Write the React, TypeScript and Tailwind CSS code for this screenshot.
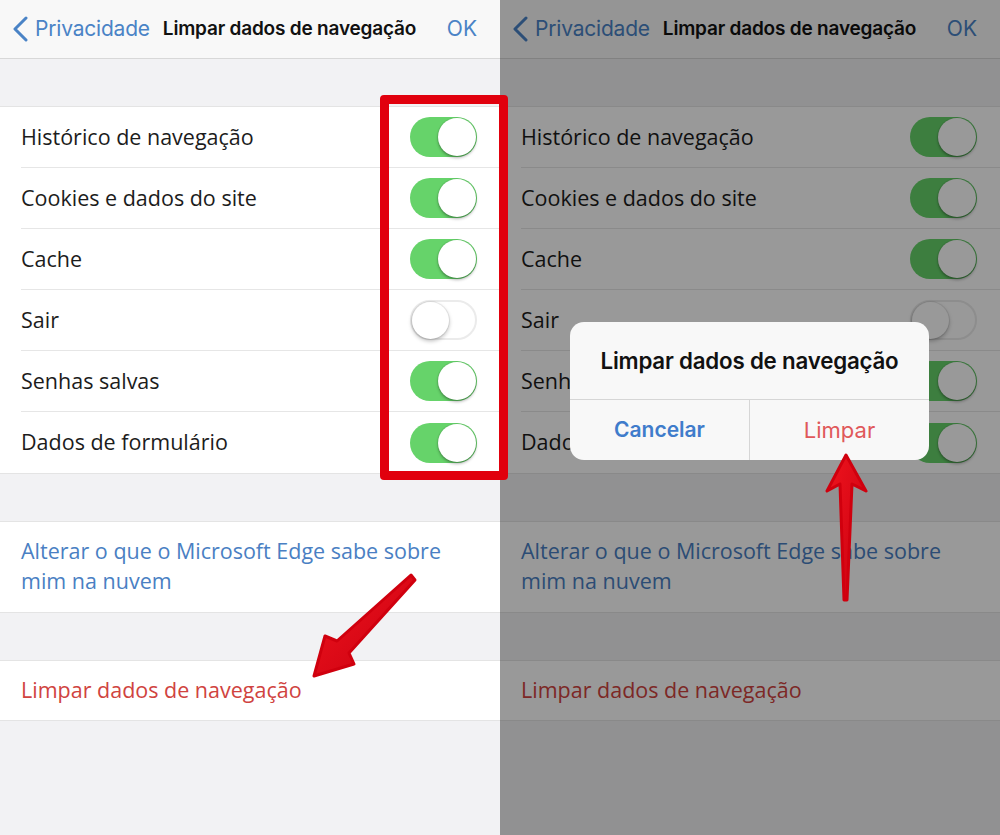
import React from 'react';

const ROWS: { label: string; on: boolean }[] = [
  { label: 'Histórico de navegação', on: true },
  { label: 'Cookies e dados do site', on: true },
  { label: 'Cache', on: true },
  { label: 'Sair', on: false },
  { label: 'Senhas salvas', on: true },
  { label: 'Dados de formulário', on: true },
];

const Toggle: React.FC<{ on: boolean }> = ({ on }) =>
  on ? (
    <div className="w-[67px] h-[40px] rounded-full bg-[#66d36a] flex items-center justify-end p-[1px]">
      <div className="w-[38px] h-[38px] rounded-full bg-white shadow-[0_2px_3px_rgba(0,0,0,0.3),0_0_0_1px_rgba(0,0,0,0.06)]" />
    </div>
  ) : (
    <div className="w-[67px] h-[40px] rounded-full bg-white border-2 border-[#ebebeb] flex items-center justify-start">
      <div className="w-[37px] h-[37px] rounded-full bg-white shadow-[0_2px_4px_rgba(0,0,0,0.28),0_0_0_1px_rgba(0,0,0,0.06)]" />
    </div>
  );

const Screen: React.FC<{ dimmed?: boolean }> = ({ dimmed }) => (
  <div className="relative w-[500px] h-[835px] bg-[#f2f2f4] overflow-hidden" style={{ fontFamily: '"Open Sans", sans-serif' }}>
    {/* Nav bar */}
    <div className="h-[59px] bg-[#f8f8f8] border-b border-[#d8d8d8] flex items-center pl-[12px] pr-[23px]" style={{ fontFamily: 'Inter, sans-serif' }}>
      <svg width="16" height="26" viewBox="0 0 16 26" className="mr-[7px]">
        <path d="M14 2 L3 13 L14 24" fill="none" stroke="#4a83c6" strokeWidth="3" strokeLinecap="round" strokeLinejoin="round" />
      </svg>
      <span className="text-[21px] text-[#4a83c6] tracking-[-0.2px]">Privacidade</span>
      <span className="ml-[13px] text-[19px] font-semibold text-[#111] tracking-[-0.2px]">Limpar dados de navegação</span>
      <span className="ml-auto text-[21px] text-[#4a83c6]">OK</span>
    </div>

    <div className="h-[47px]" />

    {/* Toggle list */}
    <div className="bg-white border-y border-[#e4e4e4]">
      {ROWS.map((r, i) => (
        <div key={r.label} className="h-[61px] pl-[21px] flex">
          <div className={`flex-1 flex items-center justify-between pr-[23px] ${i < ROWS.length - 1 ? 'border-b border-[#e6e6e6]' : ''}`}>
            <span className="text-[21.5px] text-[#1c1c1c]">{r.label}</span>
            <Toggle on={r.on} />
          </div>
        </div>
      ))}
    </div>

    <div className="h-[47px]" />

    <div className="bg-white border-y border-[#e4e4e4] h-[92px] pl-[21px] pt-[14px]">
      <p className="text-[21.5px] leading-[30px] text-[#4a7fc3] w-[450px]">Alterar o que o Microsoft Edge sabe sobre mim na nuvem</p>
    </div>

    <div className="h-[47px]" />

    <div className="bg-white border-y border-[#e4e4e4] h-[61px] pl-[21px] flex items-center">
      <span className="text-[21.5px] text-[#d04340]">Limpar dados de navegação</span>
    </div>

    {dimmed && (
      <>
        <div className="absolute inset-0 bg-black/40" />
        <div className="absolute left-[70px] top-[322px] w-[359px] h-[138px] rounded-[14px] bg-[#f8f8f8] flex flex-col" style={{ fontFamily: 'Inter, sans-serif' }}>
          <div className="h-[78px] flex items-center justify-center border-b border-[#d6d6d6]">
            <span className="text-[22.3px] font-semibold text-[#111] tracking-[-0.2px]">Limpar dados de navegação</span>
          </div>
          <div className="flex-1 flex">
            <div className="flex-1 flex items-center justify-center border-r border-[#d6d6d6]">
              <span className="text-[21px] font-semibold text-[#3f7ccb]">Cancelar</span>
            </div>
            <div className="flex-1 flex items-center justify-center">
              <span className="text-[22px] text-[#e0585a]">Limpar</span>
            </div>
          </div>
        </div>
      </>
    )}
  </div>
);

export default function App() {
  return (
    <div className="relative w-[1000px] h-[835px] flex bg-white overflow-hidden">
      <Screen />
      <Screen dimmed />

      {/* Annotations */}
      <div className="absolute left-[380px] top-[95px] w-[128px] h-[385px] border-[9px] border-[#e1000d] rounded-[4px]" />
      <svg className="absolute inset-0 pointer-events-none" width="1000" height="835" viewBox="0 0 1000 835">
        <defs>
          <linearGradient id="arr" x1="0" y1="0" x2="1" y2="1">
            <stop offset="0" stopColor="#f0141e" />
            <stop offset="1" stopColor="#c80010" />
          </linearGradient>
        </defs>
        <polygon
          points="314,676 325,636 337,641 411,575 415,580 349,653 354,664"
          fill="url(#arr)"
          stroke="#d0000e"
          strokeWidth="3"
          strokeLinejoin="round"
        />
        <polygon
          points="846,455 866,491 852,484 847,600 844,600 840,484 827,491"
          fill="url(#arr)"
          stroke="#d0000e"
          strokeWidth="3"
          strokeLinejoin="round"
        />
      </svg>
    </div>
  );
}
